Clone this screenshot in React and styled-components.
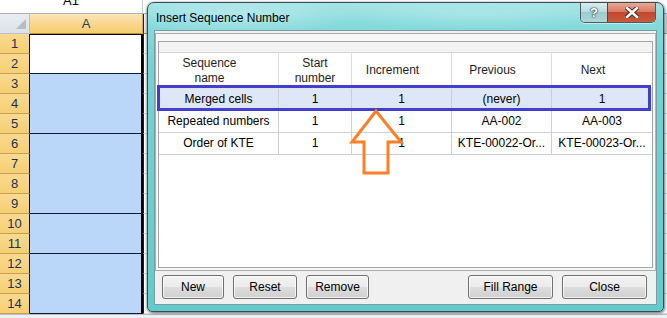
import React from 'react';
import styled, { createGlobalStyle } from 'styled-components';

const Global = createGlobalStyle`
  html, body { margin: 0; padding: 0; background: #fff; }
  body { width: 667px; height: 318px; overflow: hidden; font-family: "Liberation Sans", Arial, sans-serif; }
`;

const Screen = styled.div`
  position: relative;
  width: 667px;
  height: 318px;
  overflow: hidden;
  background: #fff;
`;

/* ---------- spreadsheet ---------- */
const FormulaBar = styled.div`
  height: 13px;
  border-bottom: 1px solid #a9b3bf;
  display: flex;
  overflow: hidden;
  background: #fff;
`;
const NameBox = styled.div`
  width: 143px;
  box-sizing: border-box;
  border-right: 1px solid #c5ccd6;
  display: flex;
  justify-content: center;
  align-items: flex-end;
  font: 13px "Liberation Sans", Arial, sans-serif;
  color: #000;
`;
const NameText = styled.span`
  line-height: 13px;
  margin-bottom: 6px;
`;

const Grid = styled.div`
  display: grid;
  grid-template-columns: 30px 113px 1fr;
  grid-template-rows: repeat(15, 20px);
`;

const Corner = styled.div`
  grid-column: 1;
  grid-row: 1;
  box-sizing: border-box;
  background: linear-gradient(180deg, #e9edf2, #dce2ea);
  border-right: 1px solid #b7c0cc;
  border-bottom: 1px solid #b7c0cc;
  display: flex;
  align-items: flex-end;
  justify-content: flex-end;
  padding: 0 3px 4px 0;
`;

const ColHeader = styled.div`
  grid-column: ${p => p.$col};
  grid-row: 1;
  box-sizing: border-box;
  display: flex;
  align-items: center;
  justify-content: center;
  font: 13px "Liberation Sans", Arial, sans-serif;
  color: #2c3c58;
  background: ${p => p.$selected
    ? 'linear-gradient(180deg, #fbe6b7 0%, #f9d891 45%, #f6cc6e 100%)'
    : 'linear-gradient(180deg, #f3f6f9, #e1e7ee)'};
  border-right: 1px solid ${p => p.$selected ? '#d9a94e' : '#c4ccd6'};
  border-bottom: 1px solid #b88f3e;
  border-left: ${p => p.$selected ? 'none' : '1px solid #1c1c1c'};
`;

const RowHeader = styled.div`
  grid-column: 1;
  grid-row: ${p => p.$row + 1};
  box-sizing: border-box;
  background: linear-gradient(180deg, #f9da90, #f6cf72);
  border-bottom: 1px solid #c99f52;
  border-right: 1px solid #111;
  display: flex;
  align-items: center;
  justify-content: center;
  font: 13px "Liberation Sans", Arial, sans-serif;
  color: #1d2f5a;
`;

const Merged = styled.div`
  grid-column: 2;
  grid-row: ${p => p.$start + 1} / span ${p => p.$span};
  box-sizing: border-box;
  background: ${p => p.$active ? '#ffffff' : '#bad7f9'};
  border-bottom: 1px solid #0d1a30;
  border-top: ${p => p.$active ? '1px solid #000' : 'none'};
  border-right: 2px solid #000;
`;

const PlainCell = styled.div`
  grid-column: 3;
  grid-row: ${p => p.$row + 1};
  box-sizing: border-box;
  background: #fff;
  border-left: 1px solid #1c1c1c;
  border-bottom: 1px solid #d6dbe2;
`;

const SheetFoot = styled.div`
  height: 4px;
  border-top: 1px solid #b9c0c8;
  background: #eef0f2;
`;

/* ---------- dialog window ---------- */
const Dialog = styled.div`
  position: absolute;
  left: 147px;
  top: 2px;
  width: 517px;
  height: 310px;
  box-sizing: border-box;
  border: 1px solid #3b4c52;
  border-radius: 7px 7px 5px 5px;
  padding: 0 6px 6px 6px;
  display: flex;
  flex-direction: column;
  background:
    radial-gradient(ellipse 120px 18px at 90px 14px, rgba(255,255,255,0.35), rgba(255,255,255,0)),
    radial-gradient(ellipse 160px 16px at 330px 12px, rgba(255,255,255,0.22), rgba(255,255,255,0)),
    linear-gradient(180deg, #a6e5e7 0%, #86dadc 6%, #74d3d5 20%, #6ccfd0 60%, #62cbcc 100%);
  box-shadow: 1px 1px 3px rgba(0, 0, 0, 0.55), -1px 0 2px rgba(0,0,0,0.25);
`;

const TitleBar = styled.div`
  height: 27px;
  display: flex;
  align-items: flex-start;
`;

const Title = styled.div`
  flex: 1;
  padding: 8px 0 0 2px;
  font: 12px "Liberation Sans", Arial, sans-serif;
  color: #000;
  line-height: 14px;
`;

const CaptionGroup = styled.div`
  display: flex;
  margin-right: 1px;
  border: 1px solid #4a5d63;
  border-top: none;
  border-radius: 0 0 5px 5px;
  overflow: hidden;
  box-shadow: 0 1px 0 rgba(255,255,255,0.5);
`;

const CaptionBtn = styled.div`
  width: ${p => p.$w}px;
  height: 19px;
  display: flex;
  align-items: center;
  justify-content: center;
  box-sizing: border-box;
  background: ${p => p.$close
    ? 'linear-gradient(180deg, #e9a795 0%, #d97c66 45%, #c2472f 50%, #c95b3f 100%)'
    : 'linear-gradient(180deg, #d6eef0 0%, #b9dde0 45%, #9ccbcf 50%, #acd7da 100%)'};
  border-left: ${p => p.$close ? '1px solid #5a4040' : 'none'};
  font: bold 13px "Liberation Sans", Arial, sans-serif;
  color: #fff;
  text-shadow: 0 0 1px #2a3a40, 0 0 1px #2a3a40, 0 0 2px #2a3a40;
`;

const Client = styled.div`
  flex: 1;
  box-sizing: border-box;
  border: 1px solid #7c9ca2;
  background: #f0f0f0;
  display: flex;
  flex-direction: column;
`;

const Panel = styled.div`
  margin-top: 2px;
  height: 238px;
  box-sizing: border-box;
  border: 1px solid #acacac;
  border-right-color: #b8b8b8;
  background: #f7f7f7;
  padding: 7px 2px 2px 2px;
  display: flex;
`;

const ListBox = styled.div`
  flex: 1;
  box-sizing: border-box;
  border: 1px solid #a5a5a5;
  background: #fff;
  display: flex;
  flex-direction: column;
  font: 12px "Liberation Sans", Arial, sans-serif;
  color: #000;
`;

const TopStrip = styled.div`
  height: 10px;
  background: #f3f3f3;
  border-bottom: 1px solid #d5d5d5;
`;

const Row = styled.div`
  position: relative;
  display: grid;
  grid-template-columns: 120px 73px 100px 100px 100px;
  height: ${p => p.$h}px;
  box-sizing: border-box;
  background: ${p => p.$selected ? '#dde7f8' : '#fff'};
  border-bottom: 1px solid ${p => p.$head ? '#e3e3e3' : '#d2d2d2'};

  ${p => p.$selected && `
    &::after {
      content: "";
      position: absolute;
      left: -2px;
      right: 1px;
      top: -4px;
      bottom: -1px;
      border: 3px solid #4040cc;
      pointer-events: none;
    }
  `}
`;

const Cell = styled.div`
  display: flex;
  align-items: center;
  justify-content: center;
  text-align: center;
  box-sizing: border-box;
  white-space: nowrap;
  line-height: 15px;
  padding-right: ${p => p.$shift ? '18px' : '0'};
  border-right: ${p => p.$last ? 'none' : `1px solid ${p.$head ? '#dedede' : '#cfcfcf'}`};
  color: ${p => p.$head ? '#1e1e1e' : '#000'};
`;

const ButtonBar = styled.div`
  margin-top: 4px;
  height: 24px;
  display: flex;
  padding: 0 9px 0 7px;
  gap: 9px;
`;

const Spacer = styled.div`
  flex: 1;
`;

const Button = styled.div`
  width: ${p => p.$w}px;
  height: 24px;
  box-sizing: border-box;
  border: 1px solid #707070;
  border-radius: 3px;
  background: linear-gradient(180deg, #f3f3f3 0%, #ebebeb 48%, #dddddd 52%, #d0d0d0 100%);
  box-shadow: inset 0 0 0 1px rgba(255,255,255,0.7);
  display: flex;
  align-items: center;
  justify-content: center;
  font: 12px "Liberation Sans", Arial, sans-serif;
  color: #000;
`;

const ArrowMark = styled.svg`
  position: absolute;
  left: 350px;
  top: 109px;
  width: 54px;
  height: 67px;
  overflow: visible;
`;

const rowNums = Array.from({ length: 14 }, (_, i) => i + 1);
const merges = [
  { start: 1, span: 2, active: true },
  { start: 3, span: 3 },
  { start: 6, span: 4 },
  { start: 10, span: 2 },
  { start: 12, span: 3 },
];

const columns = [
  { head: ['Sequence', 'name'], shift: true },
  { head: ['Start', 'number'], shift: false },
  { head: ['Increment'], shift: true },
  { head: ['Previous'], shift: true },
  { head: ['Next'], shift: true },
];

const data = [
  ['Merged cells', '1', '1', '(never)', '1'],
  ['Repeated numbers', '1', '1', 'AA-002', 'AA-003'],
  ['Order of KTE', '1', '1', 'KTE-00022-Or...', 'KTE-00023-Or...'],
];

export default function App() {
  return (
    <Screen>
      <Global />
      <FormulaBar>
        <NameBox><NameText>A1</NameText></NameBox>
      </FormulaBar>
      <Grid>
        <Corner>
          <svg width="10" height="10" viewBox="0 0 10 10">
            <polygon points="10,0 10,10 0,10" fill="#b4bcc6" />
          </svg>
        </Corner>
        <ColHeader $col={2} $selected>A</ColHeader>
        <ColHeader $col={3} />
        {rowNums.map(n => (
          <RowHeader key={n} $row={n}>{n}</RowHeader>
        ))}
        {merges.map(m => (
          <Merged key={m.start} $start={m.start} $span={m.span} $active={m.active} />
        ))}
        {rowNums.map(n => (
          <PlainCell key={n} $row={n} />
        ))}
      </Grid>
      <SheetFoot />

      <Dialog>
        <TitleBar>
          <Title>Insert Sequence Number</Title>
          <CaptionGroup>
            <CaptionBtn $w={26}>?</CaptionBtn>
            <CaptionBtn $w={48} $close>
              <svg width="14" height="11" viewBox="0 0 14 11">
                <path d="M2 1 L12 10 M12 1 L2 10" stroke="#4a2a22" strokeWidth="4.4" strokeLinecap="square" />
                <path d="M2 1 L12 10 M12 1 L2 10" stroke="#ffffff" strokeWidth="2.6" strokeLinecap="square" />
              </svg>
            </CaptionBtn>
          </CaptionGroup>
        </TitleBar>
        <Client>
          <Panel>
            <ListBox>
              <TopStrip />
              <Row $h={36} $head>
                {columns.map((c, i) => (
                  <Cell key={i} $head $shift={c.shift} $last={i === columns.length - 1}>
                    <span>{c.head.map((t, j) => (
                      <React.Fragment key={j}>{j > 0 && <br />}{t}</React.Fragment>
                    ))}</span>
                  </Cell>
                ))}
              </Row>
              {data.map((r, ri) => (
                <Row key={ri} $h={22} $selected={ri === 0}>
                  {r.map((v, ci) => (
                    <Cell key={ci} $last={ci === r.length - 1}>{v}</Cell>
                  ))}
                </Row>
              ))}
            </ListBox>
          </Panel>
          <ButtonBar>
            <Button $w={62}>New</Button>
            <Button $w={64}>Reset</Button>
            <Button $w={63}>Remove</Button>
            <Spacer />
            <Button $w={85}>Fill Range</Button>
            <Button $w={85}>Close</Button>
          </ButtonBar>
        </Client>
      </Dialog>

      <ArrowMark viewBox="0 0 54 67">
        <polygon
          points="26,2 2,33 14,33 14,64 38,64 38,33 51,33"
          fill="none"
          stroke="#ff7f27"
          strokeWidth="3"
          strokeLinejoin="miter"
        />
      </ArrowMark>
    </Screen>
  );
}
